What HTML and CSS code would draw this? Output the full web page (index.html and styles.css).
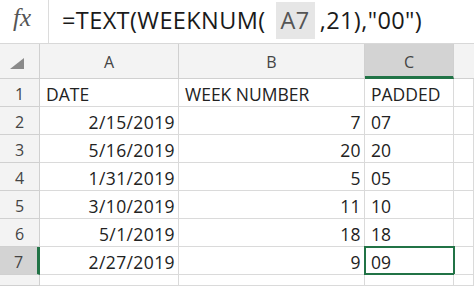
FILE: index.html
```html
<!DOCTYPE html>
<html lang="en">
<head>
  <meta charset="UTF-8" />
  <title>WEEKNUM padded</title>
  <link rel="stylesheet" href="styles.css">
</head>
<body>

  <div class="formula-bar">
    <div class="fx">fx</div>
    <div class="formula">=TEXT(WEEKNUM(<span class="ref">A7</span>,21),"00")</div>
  </div>

  <div class="sheet">
    <div class="corner"><span class="tri"></span></div>
    <div class="col-head">A</div>
    <div class="col-head">B</div>
    <div class="col-head active">C</div>
    <div class="col-head last"></div>

    <div class="row-head">1</div>
    <div class="cell">DATE</div>
    <div class="cell">WEEK NUMBER</div>
    <div class="cell">PADDED</div>
    <div class="cell"></div>

    <div class="row-head">2</div>
    <div class="cell num">2/15/2019</div>
    <div class="cell num">7</div>
    <div class="cell">07</div>
    <div class="cell"></div>

    <div class="row-head">3</div>
    <div class="cell num">5/16/2019</div>
    <div class="cell num">20</div>
    <div class="cell">20</div>
    <div class="cell"></div>

    <div class="row-head">4</div>
    <div class="cell num">1/31/2019</div>
    <div class="cell num">5</div>
    <div class="cell">05</div>
    <div class="cell"></div>

    <div class="row-head">5</div>
    <div class="cell num">3/10/2019</div>
    <div class="cell num">11</div>
    <div class="cell">10</div>
    <div class="cell"></div>

    <div class="row-head">6</div>
    <div class="cell num">5/1/2019</div>
    <div class="cell num">18</div>
    <div class="cell">18</div>
    <div class="cell"></div>

    <div class="row-head active">7</div>
    <div class="cell num">2/27/2019</div>
    <div class="cell num">9</div>
    <div class="cell selected">09</div>
    <div class="cell"></div>

    <div class="row-head"></div>
    <div class="cell"></div>
    <div class="cell"></div>
    <div class="cell"></div>
    <div class="cell"></div>
  </div>

</body>
</html>
```

FILE: styles.css
```css
* { box-sizing: border-box; }
body {
  margin: 0;
  background: #fff;
  font-family: 'Open Sans', sans-serif;
  color: #222;
  overflow: hidden;
}
.formula-bar {
  display: flex;
  height: 44px;
  border-bottom: 1px solid #d8d8d8;
}
.fx {
  width: 49px;
  border-right: 1px solid #dcdcdc;
  font-family: 'Liberation Serif', serif;
  font-style: italic;
  font-size: 25px;
  color: #555;
  padding: 4px 0 0 13px;
}
.formula {
  padding: 2px 0 0 13px;
  font-size: 23.5px;
  letter-spacing: 0.4px;
  color: #1a1a1a;
  white-space: nowrap;
}
.ref {
  display: inline-block;
  background: #e6e6e6;
  margin: 0 5px 0 10px;
  padding: 2px 5px 3px;
  color: #555;
}
.sheet {
  display: grid;
  grid-template-columns: 40px 139px 186px 89px 1fr;
  grid-template-rows: 35px repeat(7, 28px) 11px;
}
.corner, .col-head, .row-head {
  background: #f3f3f3;
  color: #444;
  font-size: 16px;
  border-right: 1px solid #d0d0d0;
  border-bottom: 1px solid #d0d0d0;
  display: flex;
  align-items: center;
  justify-content: center;
}
.corner { position: relative; }
.tri {
  position: absolute;
  left: 10px;
  top: 14px;
  width: 0;
  height: 0;
  border-left: 14px solid transparent;
  border-bottom: 11px solid #8a8a8a;
}
.col-head { padding-top: 1px; }
.col-head.active {
  background: #d3d3d3;
  border-bottom: 3px solid #217346;
  padding-top: 3px;
}
.col-head.last { border-right: none; }
.row-head { padding-top: 2px; }
.row-head.active {
  background: #d3d3d3;
  border-right: 3px solid #217346;
}
.cell {
  font-size: 17.5px;
  border-right: 1px solid #dadada;
  border-bottom: 1px solid #dadada;
  padding: 2px 3px 0 6px;
  display: flex;
  align-items: center;
  white-space: nowrap;
}
.cell.num {
  justify-content: flex-end;
  letter-spacing: 0.4px;
}
.cell.selected {
  border: 2px solid #217346;
  margin: -1px 0 0 -1px;
  padding-left: 5px;
  width: 91px;
  height: 29px;
}
```
